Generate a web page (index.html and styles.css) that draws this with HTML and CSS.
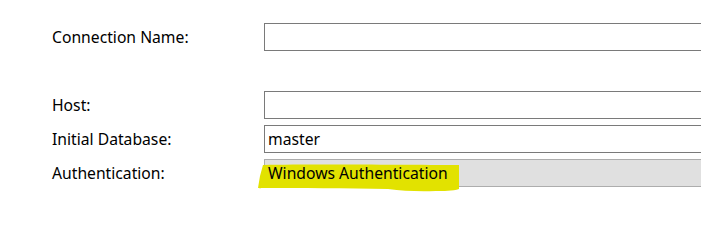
FILE: index.html
```html
<!DOCTYPE html>
<html>
<head>
<meta charset="utf-8">
<link rel="stylesheet" href="styles.css">
</head>
<body>
<div class="form">
  <div class="row">
    <label class="label">Connection Name:</label>
    <div class="field"></div>
  </div>
  <div class="row spaced">
    <label class="label">Host:</label>
    <div class="field"></div>
  </div>
  <div class="row">
    <label class="label">Initial Database:</label>
    <div class="field">master</div>
  </div>
  <div class="row">
    <label class="label">Authentication:</label>
    <div class="field select">
      <svg class="marker" width="210" height="30" viewBox="0 0 210 30">
        <path d="M5 1 C60 0 150 1 201 1 L201 25 C195 27 185 27 178 27 C160 27.5 145 27 130 25 C90 24 40 24.5 0 24 L2 12 Z" fill="#e2e200"/>
      </svg>
      <span class="value">Windows Authentication</span>
    </div>
  </div>
</div>
</body>
</html>
```
FILE: styles.css
```css
html, body {
  margin: 0;
  padding: 0;
  background: #ffffff;
}
.form {
  width: 701px;
  height: 248px;
  overflow: hidden;
  box-sizing: border-box;
  padding: 23px 0 0 52px;
  display: flex;
  flex-direction: column;
  gap: 6px;
  font-family: "Noto Sans", sans-serif;
  font-size: 15.7px;
  color: #000;
}
.row {
  display: flex;
  align-items: center;
}
.row.spaced {
  margin-top: 34px;
}
.label {
  width: 212px;
  flex: none;
}
.field {
  flex: 1;
  margin-right: -2px;
  height: 28px;
  box-sizing: border-box;
  border: 1px solid #7a7a7a;
  padding: 0 3px;
  line-height: 26px;
  position: relative;
}
.select {
  background: #e0e0e0;
  border-color: #adadad;
}
.marker {
  position: absolute;
  left: -7px;
  top: 4px;
}
.value {
  position: relative;
}
```
